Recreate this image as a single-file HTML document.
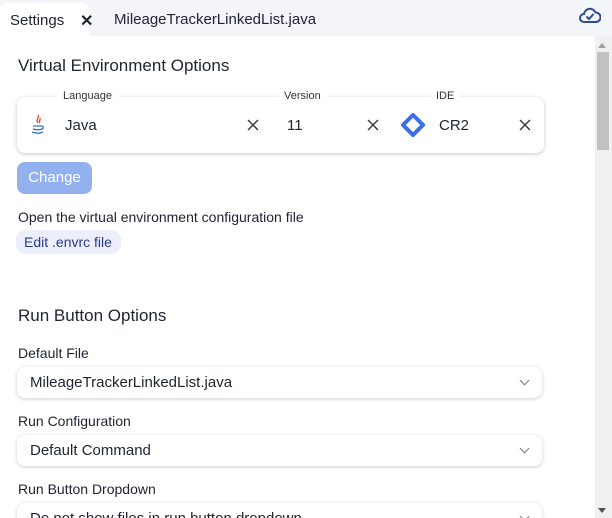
<!DOCTYPE html>
<html style="width:612px;height:518px;overflow:hidden"><head><style>
*{box-sizing:border-box;margin:0;padding:0}
body{width:612px;height:518px;overflow:hidden;background:#fff;font-family:"Liberation Sans",sans-serif;color:#1f2330;position:relative}
.tabs{position:absolute;left:0;top:0;width:612px;height:36px;background:#f4f5f8}
.tab1{position:absolute;left:0;top:3px;width:89px;height:33px;background:#fff;border-radius:6px 6px 0 0;font-size:15px;padding:9px 0 0 10px}
.tab1 b{position:absolute;left:80px;top:8px;font-size:16px}
.tab2{position:absolute;left:114px;top:11px;font-size:15px}
.sb{position:absolute;left:595px;top:36px;width:17px;height:482px;background:#f0f0f0}
.thumb{position:absolute;left:597px;top:52px;width:12px;height:98px;background:#c1c1c1}
.t{position:absolute;white-space:nowrap}
.card{position:absolute;left:17px;top:97px;width:527px;height:56px;border-radius:8px;box-shadow:0 1px 4px rgba(0,0,0,.22);background:#fff}
.lbl{position:absolute;top:90px;font-size:11px;background:#fff;padding:0 6px;color:#333}
.x{position:absolute;top:119px}
.btn{position:absolute;left:17px;top:162px;width:75px;height:32px;border-radius:8px;background:#93b0ef;color:#fff;font-size:15px;text-align:center;line-height:32px}
.chip{position:absolute;left:16px;top:230px;width:105px;height:24px;border-radius:10px;background:#eceffb;color:#2a3a8a;font-size:14px;line-height:24px;padding-left:8px}
.sel{position:absolute;left:17px;width:525px;height:31px;border-radius:8px;box-shadow:0 1px 4px rgba(0,0,0,.2);background:#fff;font-size:15px;padding:7px 0 0 13px;overflow:hidden}
.sel:after{content:"";position:absolute;right:14px;top:10px;width:6px;height:6px;border-right:1.5px solid #777;border-bottom:1.5px solid #777;transform:rotate(45deg)}
</style></head><body>
<div class="tabs"><div class="tab1">Settings<b>✕</b></div><div class="tab2">MileageTrackerLinkedList.java</div>
<svg style="position:absolute;left:579px;top:6px" width="22" height="18" viewBox="0 0 22 18"><path d="M6 16H5a4 4 0 0 1 0-8 6 6 0 0 1 11.5-1.5A4.5 4.5 0 0 1 17 16H6z" fill="none" stroke="#2a4a9a" stroke-width="2"/><path d="M7.5 10.5l2.5 2.5 4.5-5" fill="none" stroke="#2a4a9a" stroke-width="2"/></svg>
</div>
<div class="sb"></div><div class="thumb"></div>
<div style="position:absolute;left:598px;top:43px;border:4px solid transparent;border-bottom:5px solid #a0a0a0;border-top:0"></div>
<div style="position:absolute;left:598px;top:508px;border:4px solid transparent;border-top:5px solid #505050;border-bottom:0"></div>
<div class="t" style="left:18px;top:56px;font-size:17px">Virtual Environment Options</div>
<div class="card"></div>
<div class="lbl" style="left:57px">Language</div><div class="lbl" style="left:278px">Version</div><div class="lbl" style="left:430px">IDE</div>
<svg style="position:absolute;left:30px;top:114px" width="16" height="22" viewBox="0 0 16 22"><path d="M8 1c2 3-3 4 0 8M10 4c1 2-2 3 0 5" fill="none" stroke="#e04a2a" stroke-width="1.3"/><path d="M3 12h8M3 15c3 1 7 1 9 0M2 18c4 1.5 8 1.5 11 0M11 12c3 0 3 3 0 3" fill="none" stroke="#3a6fb8" stroke-width="1.3"/></svg>
<div class="t" style="left:65px;top:117px;font-size:15px">Java</div>
<svg class="x" style="left:247px" width="12" height="12"><path d="M1 1L11 11M11 1L1 11" stroke="#333" stroke-width="1.4"/></svg>
<div class="t" style="left:287px;top:117px;font-size:15px">11</div>
<svg class="x" style="left:367px" width="12" height="12"><path d="M1 1L11 11M11 1L1 11" stroke="#333" stroke-width="1.4"/></svg>
<svg style="position:absolute;left:401px;top:113px" width="24" height="24" viewBox="0 0 24 24"><path d="M12 2L22 12 12 22 2 12Z" fill="none" stroke="#3b6ee8" stroke-width="4"/></svg>
<div class="t" style="left:439px;top:117px;font-size:15px">CR2</div>
<svg class="x" style="left:519px" width="12" height="12"><path d="M1 1L11 11M11 1L1 11" stroke="#333" stroke-width="1.4"/></svg>
<div class="btn">Change</div>
<div class="t" style="left:18px;top:209px;font-size:14px">Open the virtual environment configuration file</div>
<div class="chip">Edit .envrc file</div>
<div class="t" style="left:18px;top:306px;font-size:17px">Run Button Options</div>
<div class="t" style="left:18px;top:345px;font-size:14px">Default File</div>
<div class="sel" style="top:367px">MileageTrackerLinkedList.java</div>
<div class="t" style="left:18px;top:413px;font-size:14px">Run Configuration</div>
<div class="sel" style="top:435px">Default Command</div>
<div class="t" style="left:18px;top:481px;font-size:14px">Run Button Dropdown</div>
<div class="sel" style="top:503px;height:15px;border-radius:8px 8px 0 0">Do not show files in run button dropdown</div>
</body></html>
